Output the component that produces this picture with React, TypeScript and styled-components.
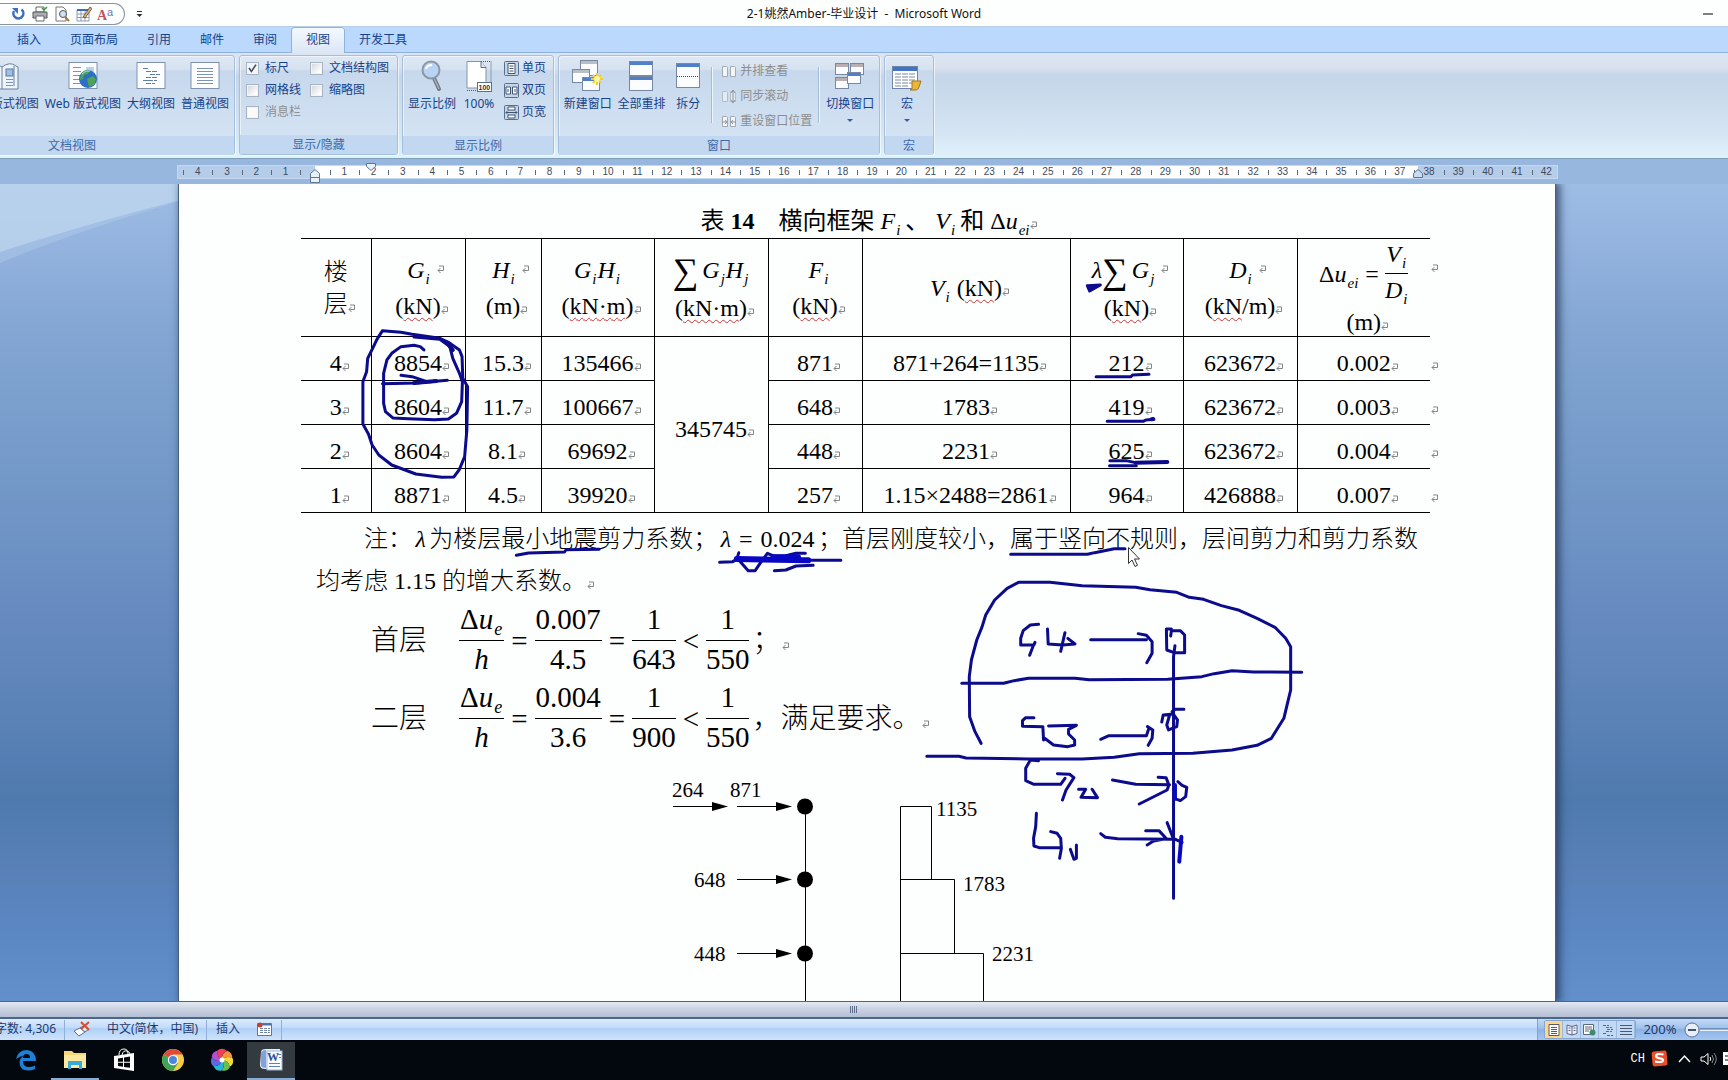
import React from "react";
import styled, { createGlobalStyle } from "styled-components";

const uiFont = `"Noto Sans", "Noto Sans CJK SC", sans-serif`;
const docFont = `"Liberation Serif", "Noto Sans CJK SC", serif`;

const GlobalStyle = createGlobalStyle`
  *, *::before, *::after { box-sizing: border-box; }
  body { margin: 0; background: #6f96c6; }
  button { font: inherit; color: inherit; background: none; border: 0; padding: 0; margin: 0; cursor: default; }
  svg { display: block; flex: none; }
`;

const Shell = styled.div`
  display: flex;
  flex-direction: column;
  height: 100vh;
  overflow: hidden;
  font: 12px/16px ${uiFont};
  color: #15428b;
`;

/* ---------- title bar ---------- */

const TitleBar = styled.header`
  display: grid;
  grid-template-columns: 1fr auto 1fr;
  align-items: center;
  height: 26px;
  flex: none;
  background: #fdfefe;
`;
const QuickAccess = styled.div`
  display: flex;
  align-items: center;
  gap: 6px;
`;
const QuickPill = styled.div`
  display: flex;
  align-items: center;
  gap: 6px;
  width: 125px;
  height: 22px;
  padding-left: 10px;
  border: 1px solid #8b93a0;
  border-left: 0;
  border-radius: 0 11px 11px 0;
`;
const IconButton = styled.button`
  display: flex;
  align-items: center;
  justify-content: center;
  width: 16px;
  height: 18px;
`;
const DocTitle = styled.h1`
  margin: 0;
  font-size: 12px;
  line-height: 28px;
  font-weight: 400;
  color: #111;
  white-space: pre;
`;
const WindowControls = styled.div`
  display: flex;
  justify-content: flex-end;
  padding-right: 12px;
`;

/* ---------- ribbon ---------- */

const TabStrip = styled.nav`
  display: flex;
  align-items: flex-end;
  gap: 1px;
  height: 27px;
  flex: none;
  padding-left: 3px;
  background: #bbd8fd;
  border-top: 1px solid #b9cfe8;
  border-bottom: 1px solid #8fb3dc;
`;
const Tab = styled.button<{ $active?: boolean }>`
  height: 25px;
  padding: 0 14px 2px;
  margin-bottom: -1px;
  border-radius: 3px 3px 0 0;
  ${(p) =>
    p.$active &&
    `background: linear-gradient(#f4f9ff, #dbe6f4);
     box-shadow: -1px 0 0 #8fb3dc, 1px 0 0 #8fb3dc, 0 -1px 0 #8fb3dc;`}
`;
const Ribbon = styled.section`
  display: flex;
  gap: 4px;
  height: 106px;
  flex: none;
  padding: 2px 0 3px;
  overflow: hidden;
  background: linear-gradient(#dbe4f3 0, #dae2ef 14px, #c6d6ea 22px, #c6d8ea 34px, #d5e5f3 80px, #def2fb 104px);
  border-bottom: 1px solid #7f9fbb;
`;
const Group = styled.div<{ $width: number; $offset?: number }>`
  display: flex;
  flex-direction: column;
  flex: none;
  width: ${(p) => p.$width}px;
  margin-left: ${(p) => p.$offset ?? 0}px;
  border: 1px solid #a5c0dc;
  border-radius: 3px;
  box-shadow: inset 1px 1px 0 rgba(255, 255, 255, 0.5), 1px 1px 0 rgba(255, 255, 255, 0.6);
  background: linear-gradient(#dee8f5 0, #d7e2f0 13px, #c7d8ed 15px, #d3e3f3 80px);
`;
const GroupBody = styled.div<{ $end?: boolean }>`
  display: flex;
  flex: 1;
  gap: 6px;
  padding: 4px 5px 0;
  ${(p) => p.$end && `justify-content: flex-end;`}
`;
const GroupLabel = styled.div`
  height: 19px;
  line-height: 20px;
  text-align: center;
  color: #3e6aaa;
  background: #c1d8f0;
  border-radius: 0 0 2px 2px;
`;
const BigButton = styled.button`
  display: flex;
  flex-direction: column;
  align-items: center;
  gap: 4px;
  min-width: 34px;
  height: 76px;
  white-space: nowrap;
`;
const BigIcon = styled.span`
  display: flex;
  align-items: center;
  justify-content: center;
  height: 32px;
`;
const Caret = styled.span`
  border: 3px solid transparent;
  border-top-color: #3c5f92;
  border-bottom: 0;
  margin-top: 3px;
`;
const CheckGrid = styled.div`
  display: grid;
  grid-template-columns: 64px auto;
  grid-auto-rows: 22px;
  align-content: start;
  padding-left: 1px;
`;
const CheckLabel = styled.label<{ $disabled?: boolean }>`
  display: flex;
  align-items: center;
  gap: 6px;
  height: 16px;
  white-space: nowrap;
  color: ${(p) => (p.$disabled ? "#8d8d8d" : "#15428b")};
`;
const CheckBox = styled.input`
  appearance: none;
  width: 13px;
  height: 13px;
  margin: 0;
  border: 1px solid #a9b4c2;
  background: linear-gradient(135deg, #cfd3da, #ffffff 80%);
  box-shadow: inset 0 0 0 1px #f4f4f4;
  &:disabled { background: #fafafa; }
  &:checked {
    background: url("data:image/svg+xml;utf8,<svg xmlns='http://www.w3.org/2000/svg' viewBox='0 0 11 11'><path d='M2 5l2.4 3.4L9 1.6' fill='none' stroke='%23404a60' stroke-width='1.6'/></svg>") center / 11px no-repeat, #f2f4f7;
  }
`;
const SmallList = styled.div<{ $gap: number; $disabled?: boolean }>`
  display: flex;
  flex-direction: column;
  gap: ${(p) => p.$gap}px;
  padding: ${(p) => (p.$disabled ? 3 : 0)}px 0 0 2px;
  color: ${(p) => (p.$disabled ? "#8d8d8d" : "#15428b")};
`;
const SmallButton = styled.button`
  display: flex;
  align-items: center;
  gap: 3px;
  height: 16px;
  white-space: nowrap;
`;
const Separator = styled.i`
  width: 2px;
  height: 56px;
  margin: 7px 0 0;
  border-left: 1px solid #a3bdd9;
  border-right: 1px solid #eef5fc;
`;

/* ---------- ruler ---------- */

const RulerBar = styled.div`
  display: flex;
  justify-content: center;
  height: 25px;
  flex: none;
  padding: 7px 0 0 7px;
  background: #98b7de;
`;
const RulerTrack = styled.div`
  position: relative;
  width: 100%;
  max-width: 1379px;
  height: 12px;
  background: linear-gradient(90deg, #b6cdea 137px, #fff 137px, #fff 1240px, #b6cdea 1240px);
  box-shadow: 0 0 0 1px #c3d8f1;
`;
const RulerCells = styled.div`
  display: grid;
  grid-template-columns: repeat(47, 1fr);
  margin: 0 -4px 0 5px;
`;
const RulerCell = styled.span`
  position: relative;
  font: 10px/12px "Liberation Sans", sans-serif;
  text-align: center;
  color: #3f4a5c;
  &::before {
    content: "";
    position: absolute;
    left: 0;
    top: 4px;
    height: 5px;
    border-left: 1px solid #5c6a80;
  }
`;
const RulerMarker = styled.svg<{ $left: number; $top: number }>`
  position: absolute;
  left: ${(p) => p.$left}px;
  top: ${(p) => p.$top}px;
`;

/* ---------- document ---------- */

const Workspace = styled.main`
  position: relative;
  display: flex;
  justify-content: center;
  flex: 1;
  min-height: 0;
  padding-left: 6px;
  overflow: hidden;
  background: linear-gradient(#9dbde5 0, #93b2de 8%, #83a6d3 18%, #7399c8 36%, #678bc0 52%, #5a82b7 66%, #4e7aae 75.5%, #5981b8 84%, #5a86c2 91%, #638fca 100%);
`;
const Swoosh = styled.svg`
  position: absolute;
  left: 0;
  top: 0;
`;
const Page = styled.article`
  position: relative;
  width: 100%;
  max-width: 1376px;
  min-height: 100%;
  padding: 0 105px 0 122px;
  background: #fdfefe;
  color: #000;
  font: 24px/36px ${docFont};
  box-shadow: -1px 0 0 #45617f, 1px 0 0 #4b617c, 3px 0 8px 2px rgba(35, 52, 84, 0.75);
`;
const Caption = styled.h2`
  display: flex;
  justify-content: center;
  align-items: center;
  height: 54px;
  margin: 0;
  padding: 20px 16px 0 0;
  font-size: 24px;
  font-weight: 400;
  white-space: pre;
  b { font-weight: 700; margin-right: 24px; }
`;
const Var = styled.i`
  font-style: italic;
  font-weight: 400;
  white-space: nowrap;
  sub { font-size: 15px; line-height: 0; vertical-align: -6px; margin: 0 1px; }
`;
const Upright = styled.span`
  font-style: normal;
`;
const CaptionVar = styled(Var)`
  margin: 0 4px 0 6px;
`;
const Sigma = styled.span`
  font-size: 36px;
  font-style: normal;
  line-height: 0;
  vertical-align: -5px;
  margin-right: 4px;
`;
const Spell = styled.span`
  text-decoration: underline wavy #c33 1px;
  text-underline-offset: 3px;
  text-decoration-skip-ink: none;
`;
const MarkIcon = styled.svg`
  display: inline-block;
  margin-right: -8px;
  vertical-align: -1px;
`;
const LineMark = styled(MarkIcon)`
  margin-left: 1px;
`;
const Grid = styled.table`
  border-collapse: collapse;
  table-layout: fixed;
  width: 100%;
  max-width: 1149px;
  font-weight: 300;
`;
const HeadCell = styled.th`
  height: 98px;
  padding: 0;
  border: 1px solid #000;
  font-weight: inherit;
  text-align: center;
  vertical-align: middle;
  white-space: nowrap;
  &:first-child { border-left: 0; }
  &:nth-last-child(2) { border-right: 0; }
`;
const HeadLines = styled.div<{ $line?: number }>`
  display: flex;
  flex-direction: column;
  align-items: center;
  line-height: ${(p) => p.$line ?? 36}px;
`;
const HeadLine = styled.div<{ $height?: number; $single?: boolean }>`
  display: flex;
  align-items: center;
  gap: 6px;
  height: ${(p) => p.$height ?? 36}px;
  padding-left: ${(p) => (p.$single ? 8 : 0)}px;
`;
const RatioHead = styled.div`
  display: flex;
  flex-direction: column;
  align-items: center;
`;
const Cell = styled.td`
  height: 44px;
  padding: 8px 0 0;
  border: 1px solid #000;
  line-height: 34px;
  text-align: center;
  white-space: nowrap;
  &:first-child { border-left: 0; }
  &:nth-last-child(2) { border-right: 0; }
`;
const EndCell = styled.td`
  padding: 8px 0 0 1px;
  border: 0;
  line-height: 34px;
  vertical-align: top;
`;
const Fraction = styled.span<{ $line: number }>`
  display: inline-flex;
  flex-direction: column;
  align-items: center;
  line-height: ${(p) => p.$line - 2}px;
  > span { height: ${(p) => p.$line}px; }
  > span:first-child {
    align-self: stretch;
    line-height: ${(p) => p.$line - 5}px;
    text-align: center;
    border-bottom: 1px solid #000;
    padding: 0 1px;
  }
`;
const Note = styled.p`
  margin: 5px 12px 0 15px;
  max-width: 1102px;
  font-weight: 300;
  line-height: 42px;
  white-space: nowrap;
`;
const NoteLine = styled.span<{ $indent?: boolean }>`
  display: flex;
  justify-content: ${(p) => (p.$indent ? "space-between" : "flex-start")};
  align-items: center;
  padding-left: ${(p) => (p.$indent ? 48 : 0)}px;
`;
const NoteValue = styled.span`
  display: flex;
  gap: 8px;
`;
const Formula = styled.div`
  display: flex;
  align-items: center;
  gap: 7px;
  height: 78px;
  padding-left: 70px;
  font-size: 29px;
  font-weight: 300;
  white-space: nowrap;
  sub { font-size: 18px; }
`;
const FormulaName = styled.span`
  width: 81px;
  font-size: 28px;
`;
const FormulaEnd = styled.span`
  margin-left: -4px;
  font-size: 28px;
`;
const Diagram = styled.svg`
  margin-left: 339px;
  text { font: 300 21px "Liberation Serif", serif; }
`;
const Ink = styled.svg`
  position: absolute;
  left: 0;
  top: 0;
  pointer-events: none;
  path { vector-effect: non-scaling-stroke; }
`;

/* ---------- bottom bars ---------- */

const Splitter = styled.div`
  display: flex;
  align-items: center;
  justify-content: center;
  height: 18px;
  flex: none;
  padding-right: 20px;
  border-top: 1px solid #49668f;
  border-bottom: 2px solid #49668f;
  background: linear-gradient(#e3e9f2, #cbd3e2 45%, #b3bed3);
`;
const StatusBar = styled.footer`
  display: flex;
  align-items: center;
  height: 21px;
  flex: none;
  color: #1d3a6d;
  background: linear-gradient(#dcebfc, #c3dcfa 40%, #b0d0f7 45%, #cfe3fb);
`;
const StatusItem = styled.button<{ $width: number; $line?: boolean; $end?: boolean }>`
  display: flex;
  align-items: center;
  justify-content: ${(p) => (p.$end ? "flex-end" : "center")};
  width: ${(p) => p.$width}px;
  height: 20px;
  padding: 0 ${(p) => (p.$end ? 8 : 0)}px 2px 0;
  white-space: nowrap;
  border-right: ${(p) => (p.$line ? "1px solid #8fb0d8" : "0")};
`;
const StatusRight = styled.div`
  display: flex;
  align-items: center;
  margin-left: auto;
  height: 21px;
  padding-left: 6px;
  border-left: 1px solid #7fa3d0;
  background: linear-gradient(#c4dbf8, #9dbfec 45%, #8bb1e6 50%, #a5c6f1);
`;
const ViewButtons = styled.div`
  display: flex;
  height: 19px;
  border: 1px solid #86a6cf;
  border-radius: 2px;
  background: #c2d9f5;
`;
const ViewButton = styled.button<{ $active?: boolean }>`
  display: flex;
  align-items: center;
  justify-content: center;
  width: 18px;
  border-right: 1px solid #9db9dd;
  background: ${(p) => (p.$active ? "#fbd68f" : "transparent")};
`;
const ZoomValue = styled.button`
  width: 48px;
  padding-bottom: 2px;
  font-size: 13px;
`;
const ZoomRail = styled.div`
  width: 28px;
  height: 3px;
  border-top: 1px solid #6d8fbf;
  border-bottom: 1px solid #eaf3ff;
`;
const Taskbar = styled.div`
  display: flex;
  align-items: stretch;
  gap: 1px;
  height: 40px;
  flex: none;
  padding-left: 2px;
  background: #02080d;
`;
const Task = styled.button<{ $open?: boolean; $active?: boolean }>`
  display: flex;
  align-items: center;
  justify-content: center;
  width: 48px;
  border-top: 2px solid transparent;
  border-bottom: 2px solid ${(p) => (p.$open ? "#86aed4" : "transparent")};
  background: ${(p) => (p.$active ? "#343b40" : "transparent")} padding-box;
`;
const Tray = styled.div`
  display: flex;
  align-items: center;
  gap: 6px;
  margin-left: auto;
  padding-bottom: 3px;
  color: #fff;
  font: 12px/16px "Liberation Mono", monospace;
`;

/* ---------- drawings ---------- */

const markArt = (
  <>
    <path d="M2 1h4.5v4.5H1" fill="none" stroke="#858585" />
    <path d="M3.5 3L1 5.5 3.5 8" fill="none" stroke="#858585" />
  </>
);
const Mark = () => <MarkIcon width="8" height="9" viewBox="0 0 8 9">{markArt}</MarkIcon>;
const FarMark = () => <LineMark width="8" height="9" viewBox="0 0 8 9">{markArt}</LineMark>;

const Sheet = ({ children }: { children?: React.ReactNode }) => (
  <svg width="30" height="28" viewBox="0 0 30 28">
    <rect x="1" y=".5" width="28" height="26" fill="#fbfdff" stroke="#7f93ae" />
    {children}
  </svg>
);
const lines = (x: number, w: number, y: number, n: number, step: number, color = "#7d92b4") =>
  Array.from({ length: n }, (_, i) => <path key={i} d={`M${x} ${y + i * step}h${w}`} stroke={color} />);

const ReadingIcon = () => (
  <svg width="34" height="28" viewBox="0 0 34 28">
    <path d="M2 5q7-5 14 0 8-6 14-1l2 1v22H2z" fill="#eef4fb" stroke="#68809f" />
    <path d="M16 5v22M28 4v20" stroke="#68809f" />
    <rect x="20" y="7" width="7" height="7" fill="#9cc0e8" stroke="#58799f" />
    {lines(20, 7, 17.5, 3, 3)}
  </svg>
);
const WebIcon = () => (
  <Sheet>
    {lines(5, 8, 5.5, 5, 4)}
    <path d="M18 5h8v5h-8z" fill="#b9d3f0" />
    <circle cx="20" cy="17" r="9" fill="#2d6fc4" />
    <path d="M13 12q4-5 9-4l-2 4-4 1-1 4-3 1zM19 17l6-3 3 3-2 6-5 2z" fill="#4fa457" />
    <path d="M14 12a8 8 0 0 1 8-3" stroke="#b6d8f8" fill="none" />
  </Sheet>
);
const OutlineIcon = () => (
  <Sheet>
    <path d="M7 6.5h6M10 9.5h11M14 12.5h10M10 15.5h11M7 18.5h5M12 18.5h9M10 21.5h9" stroke="#5f7ea8" strokeDasharray="5 1" />
  </Sheet>
);
const NormalIcon = () => <Sheet>{lines(7, 16, 6.5, 6, 3)}</Sheet>;
const MagnifierIcon = () => (
  <svg width="24" height="32" viewBox="0 0 24 32">
    <path d="M14 18l5 11" stroke="#6d7683" strokeWidth="4" strokeLinecap="round" />
    <path d="M14 18l5 11" stroke="#a9b2bd" strokeWidth="1.5" />
    <circle cx="11" cy="10" r="8.500" fill="#b9d4f2" stroke="#8a97a8" strokeWidth="2" />
    <path d="M6 9q1-4 6-4" stroke="#fff" strokeWidth="2" fill="none" />
  </svg>
);
const HundredIcon = () => (
  <svg width="26" height="32" viewBox="0 0 26 32">
    <path d="M1 1.500h14l5 6V28H1z" fill="#fff" stroke="#8394ad" />
    <path d="M15 1.500v6h5" fill="#dfe8f3" stroke="#5c6f8a" />
    <path d="M15 1.500h10V22M1 30.500h12" stroke="#4c5b73" strokeDasharray="1 1" fill="none" />
    <rect x="11.500" y="22.500" width="14" height="9" fill="#fff" stroke="#5c6f8a" />
    <text x="12.500" y="30" fontSize="7" fontFamily="Liberation Sans" fontWeight="700" fill="#333">100</text>
  </svg>
);
const PageGlyph = ({ kind }: { kind: "one" | "two" | "wide" }) => (
  <svg width="15" height="15" viewBox="0 0 15 15">
    <rect x=".5" y=".5" width="14" height="14" rx="1" fill="#c5d4e8" stroke="#58708f" />
    {kind === "one" && <path d="M4 2.500h7v10H4zM5.500 5h4M5.500 7.500h4M5.500 10h4" fill="#fff" stroke="#3f5575" />}
    {kind === "two" && <path d="M2 4h4.500v7H2zM8.500 4H13v7H8.500zM4 6v3M11 6v3" fill="#fff" stroke="#3f5575" />}
    {kind === "wide" && <path d="M4 2h7v3H4zM4 10h7v3H4zM2 7.500h11M4 5.500l-2 2 2 2M11 5.500l2 2-2 2" fill="#fff" stroke="#3f5575" />}
  </svg>
);
const Win = ({ x, y, w, h, c = "#4f7fc9" }: { x: number; y: number; w: number; h: number; c?: string }) => (
  <g>
    <rect x={x + 0.5} y={y + 0.5} width={w} height={h} fill="#fbfcfe" stroke="#7688a3" />
    <rect x={x + 1} y={y + 1} width={w - 1} height="3" fill={c} />
  </g>
);
const NewWindowIcon = () => (
  <svg width="32" height="32" viewBox="0 0 32 32">
    <Win x={8} y={0} w={17} h={15} c="#b9bec7" />
    <Win x={0} y={9} w={17} h={13} c="#b9bec7" />
    <Win x={10} y={17} w={17} h={13} />
    <path d="M25 13v12M19 19h12M21 15l8 8M29 15l-8 8" stroke="#f2cf2f" strokeWidth="2" />
    <circle cx="25" cy="19" r="3" fill="#fff59a" />
  </svg>
);
const ArrangeIcon = () => (
  <svg width="24" height="32" viewBox="0 0 24 32">
    <Win x={0} y={1} w={23} h={14} />
    <Win x={0} y={16} w={23} h={14} />
  </svg>
);
const SplitIcon = () => (
  <svg width="24" height="26" viewBox="0 0 24 26">
    <Win x={0} y={0} w={23} h={24} />
    <path d="M1 13.500h22" stroke="#3c4a60" strokeDasharray="1 1" />
  </svg>
);
const SwitchIcon = () => (
  <svg width="30" height="28" viewBox="0 0 30 28">
    <Win x={0} y={1} w={13} h={11} c="#b9aeb0" />
    <Win x={15} y={1} w={13} h={11} c="#b9aeb0" />
    <Win x={0} y={15} w={13} h={11} c="#b9aeb0" />
    <Win x={12} y={10} w={13} h={11} />
  </svg>
);
const MacroIcon = () => (
  <svg width="30" height="30" viewBox="0 0 30 30">
    <rect x=".5" y="5.500" width="25" height="22" fill="#fff" stroke="#6d84ab" />
    <rect x="1" y="6" width="24" height="4" fill="#4474c4" />
    <path d="M3 13h21M3 16h21M3 19h21M3 22h21M3 25h14" stroke="#7b88a0" strokeDasharray="6 1" />
    <path d="M20 20h9l-2 6q-1 3-3 3h-6q3-1 2-3z" fill="#e8b53d" stroke="#a77712" />
  </svg>
);
const PairGlyph = ({ kind }: { kind: "side" | "sync" | "reset" }) => (
  <svg width="16" height="15" viewBox="0 0 16 15">
    <path d="M1.500 2.500h4l1 1v9h-5zM9.500 2.500h4l1 1v9h-5z" fill="#f3f5f8" stroke="#a2a8b2" opacity={kind === "sync" ? 0.6 : 1} />
    {kind === "sync" && <path d="M12 1v12M10 4l2-3 2 3M10 11l2 3 2-3" stroke="#8d939e" fill="none" />}
    {kind === "reset" && <path d="M1 8h5M4 6l2 2-2 2M15 8h-5M12 6l-2 2 2 2" stroke="#8d939e" fill="none" />}
  </svg>
);

const InkStrokes = () => (
  <Ink width="1376" height="817" viewBox="179 184 1376 817">
    <g fill="none" stroke="#0b0b8c" strokeWidth="3" strokeLinecap="round" strokeLinejoin="round">
      <g transform="translate(290 200) scale(.37 .3333)">
        <path d="M250 392L235 418 222 448 210 475 207 515 197 545 197 672 212 702 222 735 240 765 275 795 340 822 410 832 443 831 458 808 472 770 478 690 480 560 467 535 465 470 458 450 430 428 405 415 330 403 300 397Z" />
        <path d="M335 411L405 418 432 440 440 475 458 520 466 545 464 605 450 640 428 657 390 659 320 656 278 654 258 635 253 610 253 520 262 480 275 460 300 440 335 436 352 440 362 450" />
        <path d="M250 551L340 549 425 541M300 526L330 530 370 545" />
        <path d="M335 549L395 543M425 430L440 450" strokeWidth="4" />
      </g>
      <g transform="translate(860 200) scale(.3827 .3333)">
        <path d="M594 257L628 255 600 273Z" fill="#0a0ac0" />
        <path d="M617 530L708 530 712 525 755 523M646 664L740 664 747 660 768 658M653 782L695 782 720 788M652 797L722 797" />
        <path d="M720 788L803 786M762 658L766 657" strokeWidth="4" />
      </g>
      <g transform="translate(300 510) scale(.4082 .3333)">
        <path d="M530 136L560 129 648 126 652 119 733 118M1028 157L1060 155 1070 148 1075 128M1250 151L1325 151M1075 150L1098 182 1115 182 1130 155 1145 130 1160 138 1190 137 1215 130 1238 130M1162 182L1190 180 1215 168 1257 166" />
        <path d="M1070 147L1245 151M1160 142L1220 142" strokeWidth="6" stroke="#0808c4" />
      </g>
      <g transform="translate(900 510) scale(.3571 .3333)">
        <path d="M310 133L525 133 545 128 600 116 630 116" />
        <path d="M227 700L210 665 195 620 194 500 200 450 215 390 230 350 240 315 265 270 300 235 332 217 420 217 510 227 660 232 700 239 775 247 810 262 850 268 900 287 950 301 1000 325 1050 352 1080 385 1094 410 1094 540 1085 580 1075 625 1040 685 1000 706 930 720 820 730 670 731 600 742 510 747 360 747 185 744 165 739 75 739" />
        <path d="M173 520L290 520 320 512 360 505 490 505 530 509 750 508 845 500 880 491 930 482 990 486 1125 487" />
        <path d="M388 343L365 345 345 362 338 385 338 405 375 405 378 397M374 405L363 436M413 357L415 402 455 405 490 402 470 385M462 368L450 424" />
        <path d="M534 389L690 389M667 371L690 376 706 395 706 430 691 458" />
        <path d="M758 378L760 362 785 362 797 375 797 428 768 428 747 420 746 357 760 357M770 407L766 440 766 1165" />
        <path d="M375 623L352 623 343 632 343 649 400 650 402 690M416 648L494 646 472 658 472 672 489 690 489 705 470 710 430 705 405 685" />
        <path d="M562 688L585 677 690 677 697 655M693 650L708 660 706 685 695 706" />
        <path d="M733 636L737 615 765 612 777 630 775 650 752 660 747 645 755 615M762 605L770 598 795 598" />
        <path d="M388 752L365 750 352 775 352 812 375 823 450 823 462 805M441 791L475 793 487 803 465 840 455 870M500 838L520 838 507 862 553 863 538 838" />
        <path d="M595 810L660 823 755 824M723 802L745 803 753 825 748 840 670 882" />
        <path d="M778 815L790 826 803 832 800 860 785 872 770 866" />
        <path d="M382 910L380 950 374 985 375 1008 390 1013 452 1013M422 965L440 970 450 985 452 1015 447 1045M477 1018L487 1048 494 1045 494 1005" />
        <path d="M562 971L575 982 610 986 765 988M688 962L725 962 745 985M740 987L710 993 692 1005M748 938L765 985 790 997" />
        <path d="M770 825L770 866M788 980L782 1055" strokeWidth="4" stroke="#0808c4" />
      </g>
    </g>
    <path d="M1128.500 547.500v16l3.500-3.500 3 6.500 2.500-1.200-3-6.300h5z" fill="#fff" stroke="#333" />
  </Ink>
);

const Arrow = ({ x, y }: { x: number; y: number }) => (
  <g>
    <path d={`M${x} ${y}h42`} stroke="#000" />
    <path d={`M${x + 39} ${y - 4.5}l16 4.500-16 4.500z`} />
  </g>
);
const ShearDiagram = () => (
  <Diagram width="420" height="250" viewBox="640 758 420 250">
    <text x="672" y="797">264</text>
    <text x="730" y="797">871</text>
    <text x="694" y="887">648</text>
    <text x="694" y="961">448</text>
    <Arrow x={673} y={806.5} />
    <Arrow x={737} y={806.5} />
    <Arrow x={737} y={879.5} />
    <Arrow x={737} y={953.5} />
    <path d="M805.500 806V1008M900.500 1008V806.500H931.500V879.500M900.500 879.500H954.500V953.500M900.500 953.500H983.500V1008" fill="none" stroke="#000" />
    <circle cx="805" cy="806.500" r="8" />
    <circle cx="805" cy="879.500" r="8" />
    <circle cx="805" cy="953.500" r="8" />
    <text x="936" y="816">1135</text>
    <text x="963" y="891">1783</text>
    <text x="992" y="961">2231</text>
  </Diagram>
);

/* ---------- data ---------- */

const columns = [70, 94, 76, 113, 114, 94, 208, 113, 114, 133, 20];
const rows = [
  ["4", "8854", "15.3", "135466", "871", "871+264=1135", "212", "623672", "0.002"],
  ["3", "8604", "11.7", "100667", "648", "1783", "419", "623672", "0.003"],
  ["2", "8604", "8.1", "69692", "448", "2231", "625", "623672", "0.004"],
  ["1", "8871", "4.5", "39920", "257", "1.15×2488=2861", "964", "426888", "0.007"],
];
const tabs = ["插入", "页面布局", "引用", "邮件", "审阅", "视图", "开发工具"];
const rulerNumbers = [4, 3, 2, 1, 0, ...Array.from({ length: 42 }, (_, i) => i + 1)];

const Unit = ({ spell, rest = "" }: { spell: string; rest?: string }) => (
  <span>(<Spell>{spell}</Spell>{rest})<Mark /></span>
);

const Check = ({ label, checked, disabled }: { label: string; checked?: boolean; disabled?: boolean }) => (
  <CheckLabel $disabled={disabled}>
    <CheckBox type="checkbox" defaultChecked={checked} disabled={disabled} />
    {label}
  </CheckLabel>
);
const Big = ({ icon, label, caret }: { icon: React.ReactNode; label: string; caret?: boolean }) => (
  <BigButton>
    <BigIcon>{icon}</BigIcon>
    <span>{label}</span>
    {caret && <Caret />}
  </BigButton>
);

const RatioFormula = ({ name, top, bottom, limit, end }: { name: string; top: string; bottom: string; limit: string; end: string }) => (
  <Formula>
    <FormulaName>{name}</FormulaName>
    <Fraction $line={39}>
      <span><Var><Upright>Δ</Upright>u<sub>e</sub></Var></span>
      <span><Var>h</Var></span>
    </Fraction>
    =
    <Fraction $line={39}><span>{top}</span><span>{bottom}</span></Fraction>
    =
    <Fraction $line={39}><span>1</span><span>{limit}</span></Fraction>
    &lt;
    <Fraction $line={39}><span>1</span><span>550</span></Fraction>
    <FormulaEnd>{end}<FarMark /></FormulaEnd>
  </Formula>
);

export default function App() {
  return (
    <Shell>
      <GlobalStyle />
      <TitleBar>
        <QuickAccess>
          <QuickPill>
            <IconButton aria-label="重复">
              <svg width="14" height="14" viewBox="0 0 14 14"><path d="M10.500 2.500A5 5 0 1 1 3 4" fill="none" stroke="#3d6fc0" strokeWidth="2.500" /><path d="M1 1h6v6z" fill="#3d6fc0" /></svg>
            </IconButton>
            <IconButton aria-label="打印">
              <svg width="16" height="16" viewBox="0 0 16 16"><path d="M4 1h8v5H4z" fill="#fff" stroke="#666" /><path d="M1 6h14v6H1z" fill="#a9aeb5" stroke="#555" /><path d="M4 10h8v5H4z" fill="#fff" stroke="#666" /><path d="M10 2l2 2 3-3" stroke="#3b9a3b" strokeWidth="1.500" fill="none" /></svg>
            </IconButton>
            <IconButton aria-label="打印预览">
              <svg width="16" height="16" viewBox="0 0 16 16"><path d="M2 1h7l3 3v11H2z" fill="#fff" stroke="#777" /><circle cx="9" cy="8" r="3.500" fill="#cfe2f5" stroke="#555" /><path d="M11 11l4 4" stroke="#a8752a" strokeWidth="2" /></svg>
            </IconButton>
            <IconButton aria-label="绘制表格">
              <svg width="16" height="16" viewBox="0 0 16 16"><path d="M1 4h12v11H1zM1 8h12M1 11.500h12M5 4v11M9 4v11" fill="#fff" stroke="#8d9db8" /><path d="M1 4h12" stroke="#3f6cb8" strokeWidth="2" /><path d="M7 11l7-10 2 1.500L9 12z" fill="#d9b070" stroke="#604828" strokeWidth=".8" /></svg>
            </IconButton>
            <IconButton aria-label="字体">
              <svg width="18" height="18" viewBox="0 0 18 18"><text x="0" y="15" fontSize="14" fontWeight="700" fontFamily="Liberation Serif" fill="#c05858">A</text><text x="10" y="11" fontSize="11" fontFamily="Liberation Sans" fill="#6a78b8">a</text></svg>
            </IconButton>
          </QuickPill>
          <IconButton aria-label="自定义">
            <svg width="7" height="8" viewBox="0 0 7 8"><path d="M1 1.500h5" stroke="#333" /><path d="M.5 4h6l-3 3z" fill="#333" /></svg>
          </IconButton>
        </QuickAccess>
        <DocTitle>2-1姚然Amber-毕业设计  -  Microsoft Word</DocTitle>
        <WindowControls>
          <IconButton aria-label="最小化"><svg width="10" height="2"><path d="M0 1h10" stroke="#000" /></svg></IconButton>
        </WindowControls>
      </TitleBar>

      <TabStrip>
        {tabs.map((t) => <Tab key={t} $active={t === "视图"}>{t}</Tab>)}
      </TabStrip>

      <Ribbon>
        <Group $width={326} $offset={-91}>
          <GroupBody $end>
            <Big icon={<ReadingIcon />} label="阅读版式视图" />
            <Big icon={<WebIcon />} label="Web 版式视图" />
            <Big icon={<OutlineIcon />} label="大纲视图" />
            <Big icon={<NormalIcon />} label="普通视图" />
          </GroupBody>
          <GroupLabel>文档视图</GroupLabel>
        </Group>
        <Group $width={159}>
          <GroupBody>
            <CheckGrid>
              <Check label="标尺" checked />
              <Check label="文档结构图" />
              <Check label="网格线" />
              <Check label="缩略图" />
              <Check label="消息栏" disabled />
            </CheckGrid>
          </GroupBody>
          <GroupLabel>显示/隐藏</GroupLabel>
        </Group>
        <Group $width={152}>
          <GroupBody>
            <Big icon={<MagnifierIcon />} label="显示比例" />
            <Big icon={<HundredIcon />} label="100%" />
            <SmallList $gap={6}>
              <SmallButton><PageGlyph kind="one" />单页</SmallButton>
              <SmallButton><PageGlyph kind="two" />双页</SmallButton>
              <SmallButton><PageGlyph kind="wide" />页宽</SmallButton>
            </SmallList>
          </GroupBody>
          <GroupLabel>显示比例</GroupLabel>
        </Group>
        <Group $width={322}>
          <GroupBody>
            <Big icon={<NewWindowIcon />} label="新建窗口" />
            <Big icon={<ArrangeIcon />} label="全部重排" />
            <Big icon={<SplitIcon />} label="拆分" />
            <Separator />
            <SmallList $gap={9} $disabled>
              <SmallButton disabled><PairGlyph kind="side" />并排查看</SmallButton>
              <SmallButton disabled><PairGlyph kind="sync" />同步滚动</SmallButton>
              <SmallButton disabled><PairGlyph kind="reset" />重设窗口位置</SmallButton>
            </SmallList>
            <Separator />
            <Big icon={<SwitchIcon />} label="切换窗口" caret />
          </GroupBody>
          <GroupLabel>窗口</GroupLabel>
        </Group>
        <Group $width={50}>
          <GroupBody>
            <Big icon={<MacroIcon />} label="宏" caret />
          </GroupBody>
          <GroupLabel>宏</GroupLabel>
        </Group>
      </Ribbon>

      <RulerBar>
        <RulerTrack>
          <RulerCells>
            {rulerNumbers.map((n, i) => <RulerCell key={i}>{n || ""}</RulerCell>)}
          </RulerCells>
          <RulerMarker $left={132} $top={3} width="10" height="14" viewBox="0 0 10 14">
            <path d="M.5 8.500v-4L5 .5l4.500 4v4zM.5 8.500h9v5h-9z" fill="#e8f0f8" stroke="#5f7590" />
          </RulerMarker>
          <RulerMarker $left={188} $top={-3} width="10" height="8" viewBox="0 0 10 8">
            <path d="M.5.5h9v3L5 7.500.500 3.500z" fill="#e8f0f8" stroke="#5f7590" />
          </RulerMarker>
          <RulerMarker $left={1235} $top={3} width="10" height="9" viewBox="0 0 10 9">
            <path d="M.5 8.500v-4L5 .5l4.500 4v4z" fill="#c9dcf2" stroke="#5f7590" />
          </RulerMarker>
        </RulerTrack>
      </RulerBar>

      <Workspace>
        <Swoosh width="180" height="82" viewBox="0 0 180 82">
          <path d="M0 0H180V17Q80 46 0 79Z" fill="#b9d2ee" opacity=".35" />
          <path d="M0 0H180V16Q80 42 0 68Z" fill="#c6dcf0" opacity=".55" />
        </Swoosh>
        <Page>
          <Caption>
            表 <b>14</b>横向框架<CaptionVar>F<sub>i</sub></CaptionVar>、<CaptionVar>V<sub>i</sub></CaptionVar>和<CaptionVar><Upright>Δ</Upright>u<sub>ei</sub><Mark /></CaptionVar>
          </Caption>
          <Grid>
            <colgroup>{columns.map((w, i) => <col key={i} style={{ width: w }} />)}</colgroup>
            <thead>
              <tr>
                <HeadCell><HeadLines $line={32}><span>楼</span><span>层<Mark /></span></HeadLines></HeadCell>
                <HeadCell><HeadLines><HeadLine $single><Var>G<sub>i</sub></Var><Mark /></HeadLine><Unit spell="kN" /></HeadLines></HeadCell>
                <HeadCell><HeadLines><HeadLine $single><Var>H<sub>i</sub></Var><Mark /></HeadLine><span>(m)<Mark /></span></HeadLines></HeadCell>
                <HeadCell><HeadLines><HeadLine><Var>G<sub>i</sub>H<sub>i</sub></Var></HeadLine><Unit spell="kN·m" /></HeadLines></HeadCell>
                <HeadCell><HeadLines><HeadLine $height={40}><Var><Sigma>∑</Sigma>G<sub>j</sub>H<sub>j</sub></Var></HeadLine><Unit spell="kN·m" /></HeadLines></HeadCell>
                <HeadCell><HeadLines><HeadLine $single><Var>F<sub>i</sub></Var></HeadLine><Unit spell="kN" /></HeadLines></HeadCell>
                <HeadCell><Var>V<sub>i</sub></Var> <Unit spell="kN" /></HeadCell>
                <HeadCell><HeadLines><HeadLine $height={40}><Var>λ<Sigma>∑</Sigma>G<sub>j</sub></Var><Mark /></HeadLine><Unit spell="kN" /></HeadLines></HeadCell>
                <HeadCell><HeadLines><HeadLine $single><Var>D<sub>i</sub></Var><Mark /></HeadLine><Unit spell="kN" rest="/m" /></HeadLines></HeadCell>
                <HeadCell>
                  <RatioHead>
                    <HeadLine $height={68}>
                      <Var><Upright>Δ</Upright>u<sub>ei</sub></Var>=
                      <Fraction $line={34}>
                        <span><Var>V<sub>i</sub></Var></span>
                        <span><Var>D<sub>i</sub></Var></span>
                      </Fraction>
                    </HeadLine>
                    <HeadLine $height={28}><span>(m)<Mark /></span></HeadLine>
                  </RatioHead>
                </HeadCell>
                <EndCell><Mark /></EndCell>
              </tr>
            </thead>
            <tbody>
              {rows.map((row, r) => (
                <tr key={r}>
                  {row.slice(0, 4).map((v, i) => <Cell key={i}>{v}<Mark /></Cell>)}
                  {r === 0 && <Cell rowSpan={4}>345745<Mark /></Cell>}
                  {row.slice(4).map((v, i) => <Cell key={i}>{v}<Mark /></Cell>)}
                  <EndCell><Mark /></EndCell>
                </tr>
              ))}
            </tbody>
          </Grid>
          <Note>
            <NoteLine $indent>
              <span>注：</span>
              <Var>λ</Var>
              <span>为楼层最小地震剪力系数；</span>
              <NoteValue><Var>λ</Var><span>=</span><span>0.024</span></NoteValue>
              <span>；首层刚度较小，属于竖向不规则，层间剪力和剪力系数</span>
            </NoteLine>
            <NoteLine><span>均考虑 1.15 的增大系数。<FarMark /></span></NoteLine>
          </Note>
          <RatioFormula name="首层" top="0.007" bottom="4.5" limit="643" end="；" />
          <RatioFormula name="二层" top="0.004" bottom="3.6" limit="900" end="，满足要求。" />
          <ShearDiagram />
          <InkStrokes />
        </Page>
      </Workspace>

      <Splitter>
        <svg width="8" height="7" viewBox="0 0 8 7"><path d="M.5 0v7M2.500 0v7M4.500 0v7M6.500 0v7" stroke="#5d6f8c" /></svg>
      </Splitter>
      <StatusBar>
        <StatusItem $width={65} $line $end>字数: 4,306</StatusItem>
        <StatusItem $width={34} aria-label="校对">
          <svg width="18" height="16" viewBox="0 0 18 16"><path d="M1 10l6-3 5 4-6 4z" fill="#fff" stroke="#59719a" /><path d="M7 7l5-3 4 4-4 3z" fill="#dbe6f5" stroke="#59719a" /><path d="M8 1l8 8M16 1L8 8" stroke="#d2502e" strokeWidth="2" /></svg>
        </StatusItem>
        <StatusItem $width={108} $line>中文(简体，中国)</StatusItem>
        <StatusItem $width={42}>插入</StatusItem>
        <StatusItem $width={33} $line aria-label="宏录制">
          <svg width="16" height="14" viewBox="0 0 16 14"><path d="M.5 1.500h14v12H.5z" fill="#fff" stroke="#5f7496" /><path d="M1 2.500h13" stroke="#4d72b4" strokeWidth="2" /><path d="M3 6.500h10M3 8.500h10M3 10.500h10" stroke="#6f82a2" strokeDasharray="3 1" /><circle cx="3" cy="3" r="2.500" fill="#c4432f" /></svg>
        </StatusItem>
        <StatusRight>
          <ViewButtons>
            <ViewButton $active aria-label="页面视图"><svg width="12" height="12"><path d="M1 .5h10v11H1zM3 3.500h6M3 5.500h6M3 7.500h6M3 9.500h6" fill="#fff" stroke="#5a5a60" /></svg></ViewButton>
            <ViewButton aria-label="阅读版式视图"><svg width="12" height="12"><path d="M6 2.500L1 1v8.500L6 11l5-1.500V1zM6 2v9M2.500 4h2M2.500 6.500h2M7.500 4h2M7.500 6.500h2" fill="#eef" stroke="#5c6880" /></svg></ViewButton>
            <ViewButton aria-label="Web 版式视图"><svg width="13" height="12"><path d="M.5.5h10v10H.5zM2 3h7M2 5h7M2 7h4" fill="#fff" stroke="#5c6880" /><circle cx="9.500" cy="8.500" r="3" fill="#3f8a6c" /></svg></ViewButton>
            <ViewButton aria-label="大纲视图"><svg width="12" height="12"><path d="M1 1.500h6M4 3.500h6M5 5.500h6M4 7.500h6M1 9.500h4M5 11.500h6" stroke="#5c6880" strokeDasharray="3 1" /></svg></ViewButton>
            <ViewButton aria-label="普通视图"><svg width="12" height="12"><path d="M0 1.500h12M0 4.500h12M0 7.500h12M0 10.500h12" stroke="#4c5870" /></svg></ViewButton>
          </ViewButtons>
          <ZoomValue>200%</ZoomValue>
          <IconButton aria-label="缩小">
            <svg width="16" height="16" viewBox="0 0 16 16"><circle cx="8" cy="8" r="7" fill="#e6effa" stroke="#5f7397" /><path d="M4 8h8" stroke="#44546f" strokeWidth="2" /></svg>
          </IconButton>
          <ZoomRail />
        </StatusRight>
      </StatusBar>

      <Taskbar>
        <Task aria-label="Edge">
          <svg width="22" height="22" viewBox="0 0 22 22"><path d="M1 10Q3 1 12 1q9 1 9 11H8q0 6 6 6 3 0 6-1.500V20q-3 1.500-7 1.500-8 0-8.500-8 0-4 4.500-7-4 .5-8 3.500zM8 9h7q0-4-3.500-4T8 9z" fill="#1d7fd6" fillRule="evenodd" /></svg>
        </Task>
        <Task $open aria-label="文件资源管理器">
          <svg width="22" height="20" viewBox="0 0 22 20"><path d="M0 1h8l2 2h12v15H0z" fill="#f5d777" /><path d="M0 5h22v13H0z" fill="#fbe8a0" /><path d="M4 19v-8h14v8h-3v-4H7v4z" fill="#39a9d6" /></svg>
        </Task>
        <Task aria-label="应用商店">
          <svg width="22" height="24" viewBox="0 0 22 24"><path d="M1 8l20-3v18L1 20z" fill="#fff" /><path d="M6 7q0-6 5-6 4 0 4 5M9 7q1-5 5-4 3 1 3 3" stroke="#fff" fill="none" /><path d="M5 10.500l5-.8v4H5zM11 9.500l6-1v5.200h-6zM5 14.700h5v4l-5-.7zM11 14.700h6v5l-6-.8z" fill="#02080d" /></svg>
        </Task>
        <Task aria-label="Chrome">
          <svg width="22" height="22" viewBox="0 0 22 22"><circle cx="11" cy="11" r="11" fill="#f7cc45" /><path d="M11 11L1.500 5.500A11 11 0 0 1 20.500 5.500H11z" fill="#dd4b3e" /><path d="M11 11L1.500 5.500A11 11 0 0 0 11 22l5-8z" fill="#3fa35a" /><circle cx="11" cy="11" r="5.200" fill="#fff" /><circle cx="11" cy="11" r="4" fill="#4a86e0" /></svg>
        </Task>
        <Task aria-label="浏览器">
          <svg width="24" height="24" viewBox="0 0 24 24">
            {["#ef3f5b", "#f7913a", "#f4d93a", "#67c04a", "#28b6d8", "#5a6be0", "#b44fd0"].map((c, i) => (
              <path key={c} d="M12 12Q6 9 8 2Q13-1 17 3Q11 5 12 12z" fill={c} transform={`rotate(${i * 51.4} 12 12)`} />
            ))}
            <circle cx="12" cy="12" r="2.500" fill="#fff" />
          </svg>
        </Task>
        <Task $open $active aria-label="Word">
          <svg width="24" height="24" viewBox="0 0 24 24"><path d="M2 4q0-3 5-3h14v20H6q-5 0-5-4z" fill="#e8f0fa" /><path d="M2 5q1-3 5-3v18q-5 0-5-3z" fill="#7fa3d8" /><rect x="8" y="3" width="15" height="19" fill="#f8fbff" stroke="#9db4d6" /><text x="8" y="13" fontSize="12" fontWeight="700" fontFamily="Liberation Serif" fill="#24509c">W</text><path d="M10 15.500h11M10 18.500h11M19 6.500h3M20 9.500h2" stroke="#5b80bd" /></svg>
        </Task>
        <Tray>
          <span>CH</span>
          <svg width="17" height="17" viewBox="0 0 17 17"><rect x="1" y="1" width="15" height="15" rx="2" fill="#e8502a" transform="rotate(-5 8 8)" /><path d="M12.500 4.500Q5 3 5 6q0 2 4 2.300 3.500.5 3 2.400-1 2-8 1" fill="none" stroke="#fff" strokeWidth="2.200" /></svg>
          <svg width="20" height="12" viewBox="0 0 20 12"><path d="M5 9l5.500-6L16 9" fill="none" stroke="#fff" strokeWidth="1.500" /></svg>
          <svg width="17" height="14" viewBox="0 0 17 14"><path d="M1 5h3l4-3.500v11L4 9H1z" fill="none" stroke="#fff" /><path d="M10 5q1.500 2 0 4" fill="none" stroke="#fff" /><path d="M12 3q3 4 0 8M14 1q4.500 6 0 12" fill="none" stroke="#888" /></svg>
          <svg width="5" height="14" viewBox="0 0 5 14"><rect width="8" height="13" fill="#fff" /><path d="M2 4h3M2 8h3" stroke="#02080d" /></svg>
        </Tray>
      </Taskbar>
    </Shell>
  );
}
